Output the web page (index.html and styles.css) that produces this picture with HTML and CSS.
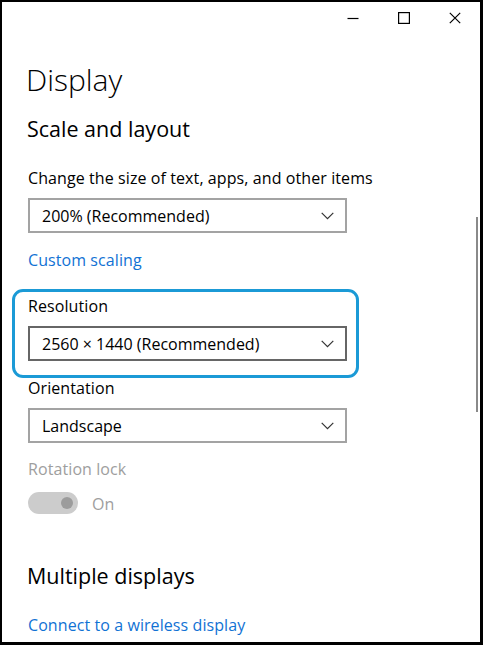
FILE: index.html
```html
<!DOCTYPE html>
<html lang="en">
<head>
<meta charset="utf-8">
<title>Display</title>
<link rel="stylesheet" href="styles.css">
</head>
<body>
<div class="window">
  <div class="titlebar">
    <span class="ctl" aria-label="Minimize">
      <svg width="12" height="12" viewBox="0 0 12 12"><path d="M0.5 6.5H11.5" stroke="#000" stroke-width="1.2" fill="none"/></svg>
    </span>
    <span class="ctl" aria-label="Maximize">
      <svg width="12" height="12" viewBox="0 0 12 12"><rect x="0.6" y="0.6" width="10.8" height="10.8" stroke="#000" stroke-width="1.2" fill="none"/></svg>
    </span>
    <span class="ctl" aria-label="Close">
      <svg width="12" height="12" viewBox="0 0 12 12"><path d="M0.8 0.8L11.2 11.2M11.2 0.8L0.8 11.2" stroke="#000" stroke-width="1.2" fill="none"/></svg>
    </span>
  </div>
  <div class="content">
    <h1 class="title">Display</h1>
    <h2 class="subtitle first">Scale and layout</h2>
    <div class="label label-scale">Change the size of text, apps, and other items</div>
    <div class="select">
      <span>200% (Recommended)</span>
      <svg class="chev" width="13" height="8" viewBox="0 0 13 8"><path d="M0.7 0.9L6.5 6.7L12.3 0.9" stroke="#333" stroke-width="1.2" fill="none"/></svg>
    </div>
    <a class="link link-scaling" href="#">Custom scaling</a>
    <div class="highlight">
      <div class="label">Resolution</div>
      <div class="select select-focus">
        <span>2560 × 1440 (Recommended)</span>
        <svg class="chev" width="13" height="8" viewBox="0 0 13 8"><path d="M0.7 0.9L6.5 6.7L12.3 0.9" stroke="#333" stroke-width="1.2" fill="none"/></svg>
      </div>
    </div>
    <div class="label">Orientation</div>
    <div class="select">
      <span>Landscape</span>
      <svg class="chev" width="13" height="8" viewBox="0 0 13 8"><path d="M0.7 0.9L6.5 6.7L12.3 0.9" stroke="#333" stroke-width="1.2" fill="none"/></svg>
    </div>
    <div class="label disabled label-rot">Rotation lock</div>
    <div class="toggle-row">
      <span class="toggle"><span class="knob"></span></span>
      <span class="toggle-text">On</span>
    </div>
    <h2 class="subtitle multi">Multiple displays</h2>
    <a class="link link-wireless" href="#">Connect to a wireless display</a>
  </div>
  <div class="scrollbar"></div>
</div>
</body>
</html>
```

FILE: styles.css
```css
* { box-sizing: border-box; }

html, body {
  margin: 0;
  padding: 0;
  background: #fff;
}

body {
  width: 483px;
  height: 646px;
  font-family: "Open Sans", "Noto Sans", sans-serif;
  color: #000;
}

.window {
  position: relative;
  width: 483px;
  height: 645px;
  border-style: solid;
  border-color: #000;
  border-width: 2px 3px 3px 2px;
  overflow: hidden;
}

.titlebar {
  display: flex;
  justify-content: flex-end;
  height: 32px;
}

.ctl {
  width: 51px;
  height: 32px;
  display: flex;
  align-items: center;
  justify-content: center;
}

.ctl svg { display: block; }

.content {
  display: flex;
  flex-direction: column;
  align-items: flex-start;
  padding-left: 26px;
}

.title {
  margin: 26px 0 0 -2px;
  font-size: 30px;
  font-weight: 300;
  line-height: 40px;
}

.subtitle {
  margin: 0 0 0 -1px;
  font-size: 21.5px;
  font-weight: 400;
  line-height: 28px;
}

.subtitle.first { margin-top: 15px; }

.label {
  font-size: 16px;
  line-height: 20px;
  letter-spacing: 0.09px;
}

.label-scale { margin-top: 25px; }

.select {
  width: 319px;
  height: 35px;
  margin-top: 10px;
  border: 2px solid #a3a3a3;
  display: flex;
  align-items: center;
  justify-content: space-between;
  padding: 0 11px 0 12px;
  font-size: 16px;
}

.select-focus { border-color: #666; }

.chev { display: block; }

.link {
  font-size: 16px;
  line-height: 20px;
  color: #1172d4;
  text-decoration: none;
  letter-spacing: 0.08px;
}

.link-scaling { margin-top: 17px; }

.highlight {
  margin: 19px 0 0 -16px;
  width: 347px;
  border: 3px solid #1b9ad6;
  border-radius: 11px;
  padding: 4px 9px 14px 13px;
}

.disabled { color: #9e9e9e; }

.label-rot { margin-top: 16px; }

.toggle-row {
  display: flex;
  align-items: center;
  margin-top: 12px;
  gap: 14px;
}

.toggle {
  width: 50px;
  height: 22px;
  border-radius: 11px;
  background: #cccccc;
  display: flex;
  align-items: center;
  justify-content: flex-end;
  padding-right: 5px;
}

.knob {
  width: 12px;
  height: 12px;
  border-radius: 50%;
  background: #9c9c9c;
}

.toggle-text {
  font-size: 16px;
  line-height: 20px;
  padding-top: 3px;
  color: #9e9e9e;
}

.multi { margin-top: 48px; }

.link-wireless { margin-top: 25px; }

.scrollbar {
  position: absolute;
  left: 474px;
  top: 215px;
  width: 2px;
  height: 195px;
  background: #8a8a8a;
}
```
